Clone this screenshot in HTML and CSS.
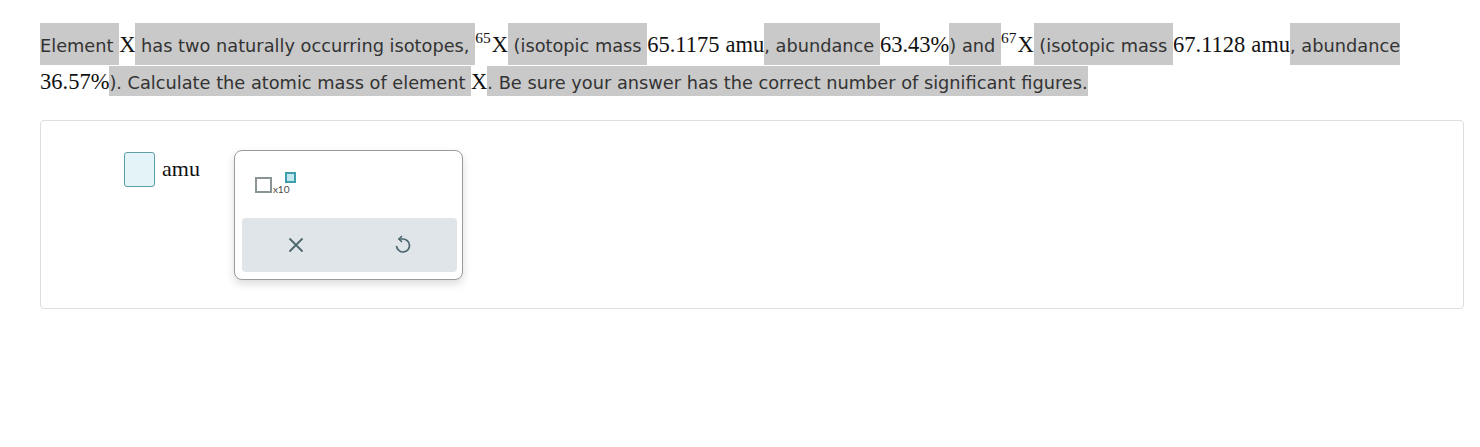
FILE: index.html
```html
<!DOCTYPE html>
<html lang="en">
<head>
<meta charset="utf-8">
<title>Atomic mass question</title>
<link rel="stylesheet" href="styles.css">
</head>
<body>
<div class="page">
  <p class="q"><span class="hl l1">Element </span><span class="m">X</span><span class="hl l1"> has two naturally occurring isotopes, </span><span class="m"><span class="sup">65</span>X</span><span class="hl l1"> (isotopic mass </span><span class="m">65.1175<span class="sp"></span>amu</span><span class="hl l1">, abundance </span><span class="m">63.43%</span><span class="hl l1">) and </span><span class="m"><span class="sup">67</span>X</span><span class="hl l1"> (isotopic mass </span><span class="m">67.1128<span class="sp"></span>amu</span><span class="hl l1">, abundance </span><span class="m">36.57%</span><span class="hl l2">). Calculate the atomic mass of element </span><span class="m">X</span><span class="hl l2">. Be sure your answer has the correct number of significant figures.</span></p>

  <div class="box">
    <div class="answer">
      <span class="input"></span>
      <span class="unit">amu</span>
    </div>
    <div class="popup">
      <div class="tpl">
        <span class="base"></span>
        <span class="x10">x10</span>
        <span class="exp"></span>
      </div>
      <div class="bar">
        <button class="btn" type="button" aria-label="Clear">
          <svg width="16" height="16" viewBox="0 0 16 16" fill="none" stroke="currentColor" stroke-width="1.8" stroke-linecap="round"><path d="M2 2 L14 14 M14 2 L2 14"/></svg>
        </button>
        <button class="btn" type="button" aria-label="Undo">
          <svg width="18" height="20" viewBox="0 0 18 20" fill="none" stroke="currentColor" stroke-width="1.7" stroke-linecap="round" stroke-linejoin="round"><path d="M7.5 1.5 L5 4 L7.5 6.5"/><path d="M5 4 H9 A6.5 6.5 0 1 1 2.6 11.5"/></svg>
        </button>
      </div>
    </div>
  </div>
</div>
</body>
</html>
```
FILE: styles.css
```css
html, body {
  margin: 0;
  padding: 0;
  background: #ffffff;
}

.page {
  padding: 27px 16px 0 40px;
  font-family: "DejaVu Sans", Verdana, sans-serif;
}

.q {
  margin: 0;
  font-size: 17.75px;
  line-height: 35px;
  color: #333333;
}

.hl {
  background: #c9c9c9;
}

.hl.l1 {
  padding: 13px 0 9px;
}

.hl.l2 {
  padding: 7px 0 3px;
}

.m {
  font-family: "Liberation Serif", "Times New Roman", serif;
  font-size: 22.5px;
  color: #111111;
}

.sup {
  font-size: 15.5px;
  line-height: 1;
  vertical-align: 9px;
  margin-right: 1px;
}

.sp {
  display: inline-block;
  width: 6px;
}

.box {
  margin-top: 19px;
  height: 189px;
  box-sizing: border-box;
  border: 1px solid #dedede;
  border-radius: 4px;
  display: flex;
  align-items: flex-start;
  padding: 29px 0 0 83px;
}

.answer {
  display: flex;
  align-items: flex-start;
  margin-top: 2px;
}

.input {
  display: block;
  width: 31px;
  height: 35px;
  box-sizing: border-box;
  border: 1.5px solid #5e9ea7;
  border-radius: 3px;
  background: #e3f3f8;
}

.unit {
  margin-left: 7px;
  font-family: "Liberation Serif", "Times New Roman", serif;
  font-size: 22px;
  line-height: 33px;
  color: #111111;
}

.popup {
  margin-left: 34px;
  width: 229px;
  height: 130px;
  box-sizing: border-box;
  border: 1px solid #9a9a9a;
  border-radius: 8px;
  background: #ffffff;
  box-shadow: 0 4px 8px rgba(0, 0, 0, 0.14);
  display: flex;
  flex-direction: column;
  padding: 21px 5px 7px 7px;
}

.tpl {
  display: flex;
  align-items: flex-end;
  height: 21px;
  margin-left: 13px;
}

.base {
  display: block;
  width: 17px;
  height: 16px;
  box-sizing: border-box;
  border: 2px solid #8a9497;
}

.x10 {
  font-family: Lato, "Open Sans", sans-serif;
  font-size: 10px;
  line-height: 10px;
  color: #4a4a4a;
  margin-left: 1px;
  margin-bottom: -1px;
}

.exp {
  display: block;
  align-self: flex-start;
  width: 11px;
  height: 11px;
  box-sizing: border-box;
  border: 2px solid #3d9eac;
  background: #c3e7ef;
  margin-left: -4px;
}

.bar {
  margin-top: auto;
  height: 54px;
  background: #dfe5e8;
  border-radius: 4px;
  display: flex;
}

.btn {
  flex: 1;
  border: 0;
  background: transparent;
  padding: 0;
  display: flex;
  align-items: center;
  justify-content: center;
  color: #4b666e;
  cursor: pointer;
}
```
